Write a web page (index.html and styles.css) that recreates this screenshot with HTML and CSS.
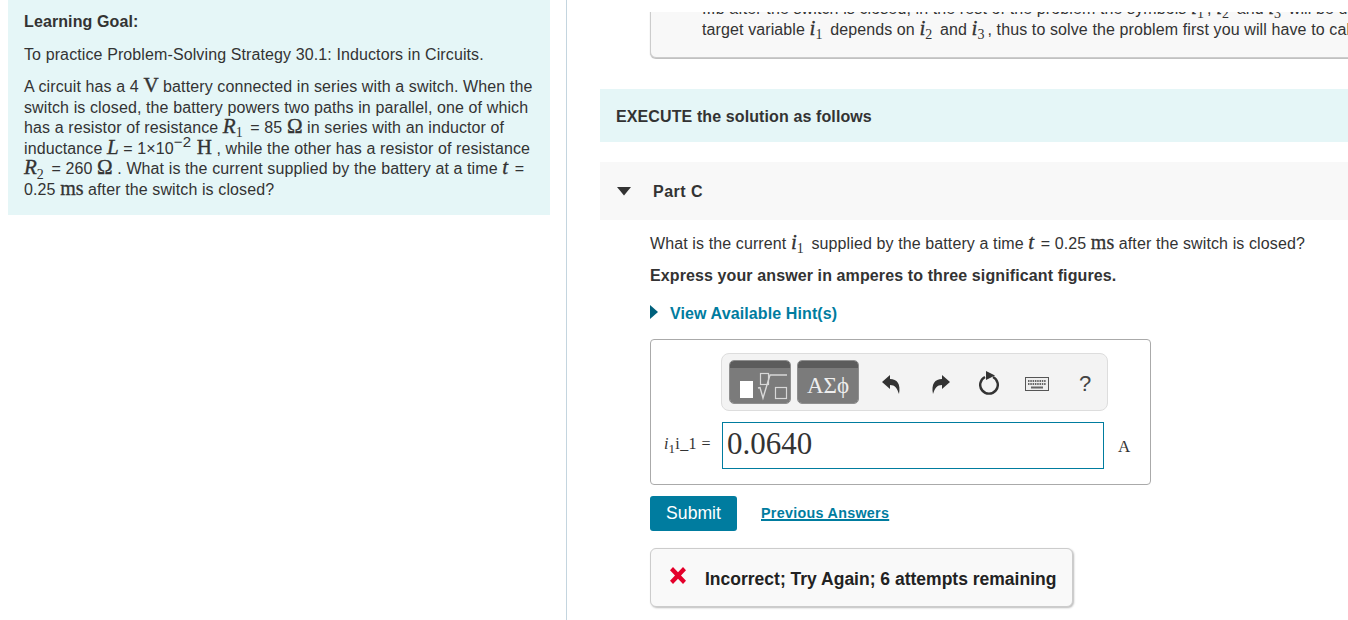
FILE: index.html
```html
<!DOCTYPE html>
<html lang="en">
<head>
<meta charset="utf-8">
<title>Learning Goal</title>
<link rel="stylesheet" href="styles.css">
</head>
<body>
<div class="page">
  <aside class="left">
    <section class="goal">
      <p class="goal-title">Learning Goal:</p>
      <p class="goal-aim">To practice Problem-Solving Strategy 30.1: Inductors in Circuits.</p>
      <p class="goal-text">A circuit has a 4 <span class="mr">V</span> battery connected in series with a switch. When the switch is closed, the battery powers two paths in parallel, one of which has a resistor of resistance <span class="mi">R</span><sub>1</sub> = 85 <span class="mr">Ω</span> in series with an inductor of inductance <span class="mi">L</span> = 1×10<sup>−2</sup> <span class="mr">H</span> , while the other has a resistor of resistance <span class="mi">R</span><sub>2</sub> = 260 <span class="mr">Ω</span> . What is the current supplied by the battery at a time <span class="mi mi-t">t</span> = 0.25 <span class="mu">ms</span> after the switch is closed?</p>
    </section>
  </aside>
  <main class="right">
    <div class="clip">
      <div class="card">
        <p class="card-line">IIIb after the switch is closed, in the rest of the problem the symbols <span class="mi">i</span><sub>1</sub>, <span class="mi">i</span><sub>2</sub> and <span class="mi">i</span><sub>3</sub> will be used for the currents.</p>
        <p class="card-line">target variable <span class="mi">i</span><sub>1</sub> depends on <span class="mi">i</span><sub>2</sub> and <span class="mi">i</span><sub>3</sub>, thus to solve the problem first you will have to calculate the other currents.</p>
      </div>
    </div>
    <div class="execute">EXECUTE the solution as follows</div>
    <div class="part-head">
      <svg class="caret-down" viewBox="0 0 14 9" width="14" height="9"><path d="M0 0h14L7 8.500z"/></svg>
      <span class="part-title">Part C</span>
    </div>
    <div class="part-body">
      <p class="question">What is the current <span class="mi">i</span><sub>1</sub> supplied by the battery a time <span class="mi mi-t">t</span> = 0.25 <span class="mu">ms</span> after the switch is closed?</p>
      <p class="instruction">Express your answer in amperes to three significant figures.</p>
      <div class="hint">
        <svg class="caret-right" viewBox="0 0 8 14" width="8" height="14"><path d="M0 0l8 7-8 7z"/></svg>
        <span>View Available Hint(s)</span>
      </div>
      <div class="answer">
        <div class="toolbar">
          <div class="tool">
            <span class="tool-band"></span>
            <span class="tool-face">
              <svg viewBox="0 0 60 35" width="60" height="35"><rect x="10" y="13" width="13" height="17" fill="#fff"/><rect x="30.500" y="5.500" width="8" height="11" fill="none" stroke="#d8d8d8" stroke-width="1.200"/><path d="M28 20l2-.5 3 10.500 7-23h17" fill="none" stroke="#d8d8d8" stroke-width="1.400"/><rect x="45.500" y="19.500" width="11" height="11" fill="none" stroke="#d8d8d8" stroke-width="1.200"/></svg>
            </span>
          </div>
          <div class="tool">
            <span class="tool-band"></span>
            <span class="tool-face tool-greek">ΑΣϕ</span>
          </div>
          <div class="actions">
            <svg class="act act-undo" viewBox="0 0 19 19" width="19" height="19"><path d="M0 7L8 0V4C15 4 19 9 17 19C15 13 13 10 8 10V14Z" fill="#333"/></svg>
            <svg class="act act-redo" viewBox="0 0 19 19" width="19" height="19"><path d="M19 7L11 0V4C4 4 0 9 2 19C4 13 6 10 11 10V14Z" fill="#333"/></svg>
            <svg class="act act-reset" viewBox="0 0 20 24" width="20" height="24"><path d="M6 6A8.800 8.800 0 1 0 14 6" fill="none" stroke="#333" stroke-width="2.400"/><path d="M7 0l9 4.500-9 4.500z" fill="#333"/></svg>
            <svg class="act act-keys" viewBox="0 0 24 14" width="24" height="14"><rect x=".5" y=".5" width="23" height="13" fill="#eee" stroke="#555"/><path d="M3 4h18M3 7h18" stroke="#666" stroke-width="2" stroke-dasharray="1.500 .8"/><path d="M6 10.500h12" stroke="#666" stroke-width="2"/></svg>
            <span class="qmark">?</span>
          </div>
        </div>
        <div class="entry">
          <span class="entry-label"><span class="mi-plain">i</span><sub>1</sub>i_1 =</span>
          <div class="entry-input">0.0640</div>
          <span class="entry-unit">A</span>
        </div>
      </div>
      <div class="submit-row">
        <button class="submit" type="button">Submit</button>
        <a class="prev" href="#">Previous Answers</a>
      </div>
      <div class="feedback">
        <svg class="cross" viewBox="0 0 18 16" width="18" height="17" preserveAspectRatio="none"><path d="M1 3l3-3 5 5 5-5 3 3-5 5 5 5-3 3-5-5-5 5-3-3 5-5z" fill="#e4002b"/></svg>
        <span class="feedback-text">Incorrect; Try Again; 6 attempts remaining</span>
      </div>
    </div>
  </main>
</div>
</body>
</html>
```
FILE: styles.css
```css
* { box-sizing: border-box; }
html, body { margin: 0; height: 100%; overflow: hidden; background: #fff; }
body { font-family: "Liberation Sans", Arial, sans-serif; font-size: 16px; letter-spacing: .11px; color: #333; }
p { margin: 0; }
sub, sup { line-height: 0; font-size: 14px; font-family: "Liberation Serif", serif; }
sub { margin-right: 3px; }
sup { font-family: "Liberation Sans", sans-serif; font-size: 15px; margin-right: 1px; }

.mi, .mr, .mu, .mi-plain { font-family: "Liberation Serif", "Times New Roman", serif; line-height: 0; letter-spacing: 0; }
.mi { font-style: italic; font-size: 21px; -webkit-text-stroke: .35px #333; }
.mi-t { margin-right: 2px; }
.mr { font-size: 21px; -webkit-text-stroke: .35px #333; }
.mu { font-size: 20px; -webkit-text-stroke: .3px #333; }
.mi-plain { font-style: italic; }

.page { display: flex; height: 620px; }
.left { width: 567px; flex: none; border-right: 1px solid #c4d5df; padding-left: 8px; padding-right: 16px; }
.goal { background: #e5f6f7; padding: 12px 16px 16px; height: 215px; }
.goal-title { font-weight: bold; line-height: 20px; }
.goal-aim { margin-top: 13px; line-height: 20px; }
.goal-text { margin-top: 12px; line-height: 20.6px; }

.right { flex: 1; min-width: 0; padding-left: 33px; overflow: hidden; }
.clip { margin-top: 12px; height: 47px; overflow: hidden; padding-left: 50px; }
.card { margin-top: -26px; height: 72px; width: 900px; background: #f8f8f8; border: 1px solid #ccc; border-radius: 6px; padding: 11px 51px; box-shadow: 0 1px 1px #bbb; }
.card-line { line-height: 21px; white-space: nowrap; }

.execute { margin-top: 30px; height: 53px; background: #e5f6f7; padding-left: 16px; font-weight: bold; line-height: 55px; }
.part-head { margin-top: 20px; height: 58px; background: #f8f8f8; display: flex; align-items: center; font-weight: bold; padding: 2px 0 0 17px; gap: 22px; }
.part-title { letter-spacing: .5px; }
.caret-down { fill: #333; margin-top: -2px; }

.part-body { padding-left: 50px; }
.question { margin-top: 14px; line-height: 20px; white-space: nowrap; }
.instruction { margin-top: 12px; font-weight: bold; line-height: 20px; }
.hint { margin-top: 18px; display: flex; align-items: center; gap: 12px; color: #007c9f; font-weight: bold; line-height: 20px; }
.caret-right { fill: #00607c; margin-top: -4px; }

.answer { margin-top: 15px; width: 501px; height: 146px; border: 1px solid #aaa; border-radius: 4px; padding: 13px 0 0 13px; }
.toolbar { margin-left: 57px; width: 387px; height: 58px; background: #f3f3f3; border: 1px solid #ddd; border-radius: 8px; display: flex; padding: 6px 7px; gap: 6px; }
.tool { width: 62px; height: 44px; border-radius: 5px; overflow: hidden; border: 1px solid #8f8f8f; display: flex; flex-direction: column; flex: none; }
.tool-band { height: 7px; background: #5c5c5c; flex: none; }
.tool-face { flex: 1; background: #7b7b7b; display: flex; align-items: flex-end; justify-content: center; color: #eee; }
.tool-face svg { display: block; }
.tool-greek { font-family: "Liberation Serif", serif; font-size: 23px; letter-spacing: 0; align-items: center; }
.actions { flex: 1; display: flex; align-items: center; padding: 4px 0 0 17px; }
.act { flex: none; }
.act-redo { margin-left: 30px; }
.act-reset { margin-left: 29px; margin-top: -2px; }
.act-keys { margin-left: 26px; }
.qmark { margin-left: 30px; font-size: 22px; color: #444; letter-spacing: 0; }

.entry { display: flex; align-items: center; margin-top: 11px; height: 47px; font-family: "Liberation Serif", serif; font-size: 16px; letter-spacing: 0; }
.entry-label { width: 58px; flex: none; white-space: nowrap; color: #333; margin-top: -4px; letter-spacing: .4px; }
.entry-label sub { margin-right: 0; font-size: 13px; }
.entry-input { width: 382px; flex: none; height: 47px; border: 1px solid #007c9f; font-size: 31px; line-height: 42px; padding-left: 4px; color: #333; }
.entry-unit { margin: 2px 0 0 14px; font-size: 17px; }

.submit-row { margin-top: 11px; display: flex; align-items: center; gap: 24px; }
.submit { width: 87px; height: 35px; background: #007c9f; color: #fff; border: 0; border-radius: 3px; font: 17.600px "Liberation Sans", Arial, sans-serif; padding: 0; }
.prev { color: #007c9f; font-weight: bold; font-size: 14.300px; letter-spacing: .3px; margin-top: -2px; text-decoration-thickness: 1.500px; }

.feedback { margin-top: 17px; width: 423px; height: 59px; background: #f9f9f9; border: 1px solid #ccc; border-radius: 6px; box-shadow: 1px 1px 2px #bbb; display: flex; align-items: center; padding-left: 18px; gap: 18px; font-weight: bold; font-size: 17.500px; letter-spacing: 0; color: #222; }
.feedback-text { margin-top: 4px; }
.cross { flex: none; margin-top: -5px; }
```
